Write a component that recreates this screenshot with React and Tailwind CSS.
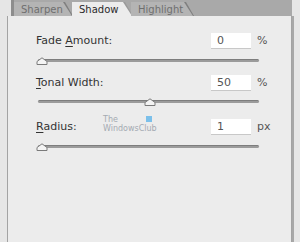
import React from 'react'

const FONT = { fontFamily: '"DejaVu Sans", "Liberation Sans", sans-serif' }

function Tab({ label, active, className }) {
  return (
    <div className={`relative h-full ${className}`}>
      <div
        className={`absolute inset-0 [clip-path:polygon(0_0,calc(100%-8px)_0,100%_100%,0_100%)] ${active ? 'bg-[#9a9a9a]' : 'bg-[#7f7f7f]'}`}
      />
      <div
        className={`absolute left-0 top-0 bottom-0 right-[1px] [clip-path:polygon(0_0,calc(100%-9px)_0,100%_100%,0_100%)] ${active ? 'bg-[#ececec]' : 'bg-[#b4b4b4]'}`}
      />
      <span
        className={`relative block pl-[7px] pt-[1px] text-[10px] leading-[13px] ${active ? 'text-[#2b2b2b]' : 'text-[#6f6f6f]'}`}
      >
        {label}
      </span>
    </div>
  )
}

function Slider({ pos }) {
  return (
    <div className="relative h-[14px] ml-[30px] w-[221px]">
      <div className="absolute left-0 right-0 top-[5px] h-[3px] rounded-full bg-[#9b9b9b] border-t border-[#7d7d7d]" />
      <svg
        className="absolute top-[3px]"
        style={{ left: pos - 6 }}
        width="12"
        height="8"
        viewBox="0 0 12 8"
      >
        <path d="M1 7.5 L1 4.5 L6 0.8 L11 4.5 L11 7.5 Z" fill="#f4f4f4" stroke="#7a7a7a" strokeWidth="1" />
      </svg>
    </div>
  )
}

function Row({ label, mnemonic, rest, value, unit, children }) {
  return (
    <div className="relative flex items-center h-[16px] ml-[28px]">
      <span className="flex-1 text-[11px] text-[#333]">
        <span className="underline underline-offset-2">{mnemonic}</span>
        {rest}
      </span>
      {children}
      <div className="w-[40px] h-[16px] bg-white border-b border-[#c8c8c8] pl-[6px] text-[11px] leading-[16px] text-[#555]">
        {value}
      </div>
      <span className="w-[40px] pl-[6px] text-[11px] text-[#555]">{unit}</span>
    </div>
  )
}

export default function App() {
  return (
    <div className="w-[300px] h-[242px] bg-[#e6e6e6] flex flex-col overflow-hidden" style={FONT}>
      <div className="flex h-[16px] ml-[11px] mr-[8px] bg-[#a9a9a9] border-l-[3px] border-[#8d8d8d] items-end">
        <div className="flex h-[14px]">
          <Tab label="Sharpen" className="w-[59px]" />
          <Tab label="Shadow" active className="w-[61px] -ml-[1px] h-[15px] self-end" />
          <Tab label="Highlight" className="w-[63px] -ml-[2px]" />
        </div>
      </div>
      <div className="flex-1 ml-[7px] mr-[8px] border-l border-r border-[#a3a3a3] bg-[#ececec] shadow-[2px_0_0_#a8a8a8]">
        <div className="mt-[17px]">
          <Row mnemonic="" label="" rest={<>Fade <span className="underline underline-offset-2">A</span>mount:</>} value="0" unit="%" />
          <div className="mt-[5px]">
            <Slider pos={4} />
          </div>
        </div>
        <div className="mt-[7px]">
          <Row mnemonic="T" rest="onal Width:" value="50" unit="%" />
          <div className="mt-[4px]">
            <Slider pos={112} />
          </div>
        </div>
        <div className="mt-[10px]">
          <Row mnemonic="R" rest="adius:" value="1" unit="px">
            <div className="absolute left-[67px] top-[-4px] text-[8px] leading-[9px] text-[#a4aab2]">
              <div>The</div>
              <div>WindowsClub</div>
              <div className="absolute left-[43px] top-[1px] w-[6px] h-[6px] bg-[#7cc0ea]" />
            </div>
          </Row>
          <div className="mt-[5px]">
            <Slider pos={4} />
          </div>
        </div>
      </div>
    </div>
  )
}
